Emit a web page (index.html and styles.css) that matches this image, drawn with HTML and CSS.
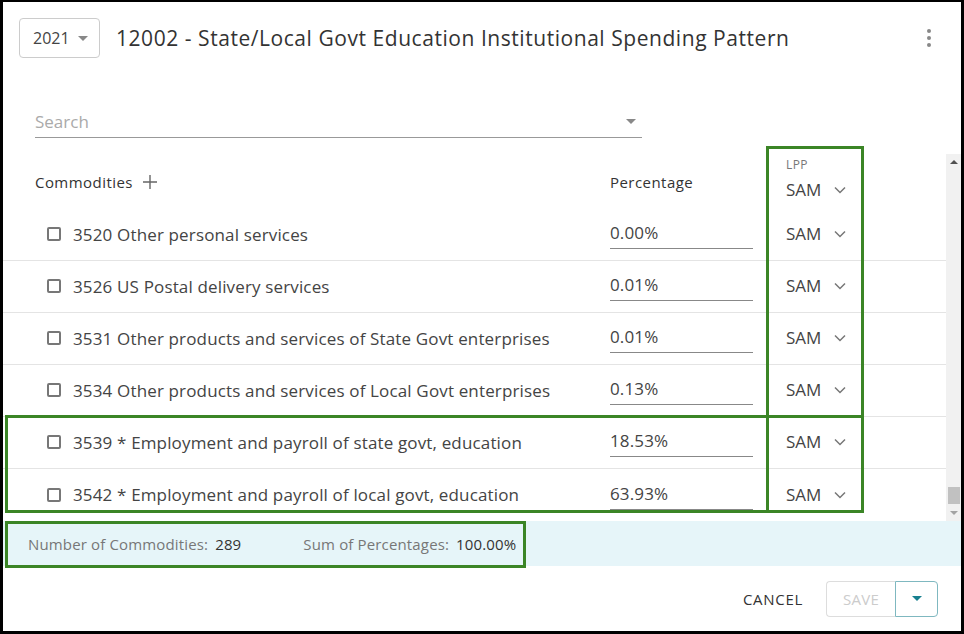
FILE: index.html
```html
<!DOCTYPE html>
<html lang="en">
<head>
    <meta charset="UTF-8">
    <meta name="viewport" content="width=device-width, initial-scale=1.0">
    <title>Spending Pattern</title>
    <link rel="stylesheet" href="styles.css">
</head>
<body>
    <div class="dialog">
        <div class="dlg-head">
            <div class="year-select">
                <span>2021</span>
                <span class="caret"></span>
            </div>
            <h1 class="title">12002 - State/Local Govt Education Institutional Spending Pattern</h1>
            <div class="kebab"><i></i><i></i><i></i></div>
        </div>

        <div class="search-row">
            <div class="search">
                <span>Search</span>
                <span class="caret"></span>
            </div>
        </div>

        <div class="table-wrap">
            <div class="table">
                <div class="row head">
                    <div class="cell name">Commodities
                        <svg class="plus" width="16" height="16" viewBox="0 0 16 16"><path d="M8 1v14M1 8h14" stroke="#666" stroke-width="1.4" fill="none"/></svg>
                    </div>
                    <div class="cell">Percentage</div>
                    <div class="cell lpp">
                        <span class="lpp-label">LPP</span>
                        <div class="sam">SAM <svg width="12" height="8" viewBox="0 0 12 8"><path d="M1 1.5l5 5 5-5" stroke="#777" stroke-width="1.5" fill="none"/></svg></div>
                    </div>
                </div>
                <div class="row">
                    <div class="cell name"><span class="check"></span>3520 Other personal services</div>
                    <div class="cell"><div class="pct">0.00%</div></div>
                    <div class="cell"><div class="sam">SAM <svg width="12" height="8" viewBox="0 0 12 8"><path d="M1 1.5l5 5 5-5" stroke="#777" stroke-width="1.5" fill="none"/></svg></div></div>
                </div>
                <div class="row">
                    <div class="cell name"><span class="check"></span>3526 US Postal delivery services</div>
                    <div class="cell"><div class="pct">0.01%</div></div>
                    <div class="cell"><div class="sam">SAM <svg width="12" height="8" viewBox="0 0 12 8"><path d="M1 1.5l5 5 5-5" stroke="#777" stroke-width="1.5" fill="none"/></svg></div></div>
                </div>
                <div class="row">
                    <div class="cell name"><span class="check"></span>3531 Other products and services of State Govt enterprises</div>
                    <div class="cell"><div class="pct">0.01%</div></div>
                    <div class="cell"><div class="sam">SAM <svg width="12" height="8" viewBox="0 0 12 8"><path d="M1 1.5l5 5 5-5" stroke="#777" stroke-width="1.5" fill="none"/></svg></div></div>
                </div>
                <div class="row">
                    <div class="cell name"><span class="check"></span>3534 Other products and services of Local Govt enterprises</div>
                    <div class="cell"><div class="pct">0.13%</div></div>
                    <div class="cell"><div class="sam">SAM <svg width="12" height="8" viewBox="0 0 12 8"><path d="M1 1.5l5 5 5-5" stroke="#777" stroke-width="1.5" fill="none"/></svg></div></div>
                </div>
                <div class="row">
                    <div class="cell name"><span class="check"></span>3539 * Employment and payroll of state govt, education</div>
                    <div class="cell"><div class="pct">18.53%</div></div>
                    <div class="cell"><div class="sam">SAM <svg width="12" height="8" viewBox="0 0 12 8"><path d="M1 1.5l5 5 5-5" stroke="#777" stroke-width="1.5" fill="none"/></svg></div></div>
                </div>
                <div class="row last">
                    <div class="cell name"><span class="check"></span>3542 * Employment and payroll of local govt, education</div>
                    <div class="cell"><div class="pct">63.93%</div></div>
                    <div class="cell"><div class="sam">SAM <svg width="12" height="8" viewBox="0 0 12 8"><path d="M1 1.5l5 5 5-5" stroke="#777" stroke-width="1.5" fill="none"/></svg></div></div>
                </div>
            </div>
            <div class="scrollbar">
                <span class="arrow up"></span>
                <span class="track"><span class="thumb"></span></span>
                <span class="arrow down"></span>
            </div>
        </div>

        <div class="summary">
            <span class="label">Number of Commodities:</span><span class="value">289</span>
            <span class="label second">Sum of Percentages:</span><span class="value">100.00%</span>
        </div>

        <div class="actions">
            <button class="btn-text">CANCEL</button>
            <div class="split">
                <button class="save" disabled>SAVE</button>
                <button class="more"><span class="caret teal"></span></button>
            </div>
        </div>

        <!-- highlight boxes -->
        <div class="mark mark-lpp"></div>
        <div class="mark mark-rows"></div>
        <div class="mark mark-sum"></div>
    </div>
</body>
</html>
```

FILE: styles.css
```css
html, body {
    margin: 0;
    padding: 0;
}
body {
    font-family: "Open Sans", Arial, sans-serif;
    color: #333;
    background: #000;
}
.dialog {
    position: relative;
    width: 964px;
    height: 634px;
    box-sizing: border-box;
    border: 3px solid #000;
    border-top-width: 2px;
    background: #fff;
    display: flex;
    flex-direction: column;
}
.dlg-head {
    display: flex;
    align-items: center;
    height: 40px;
    padding: 16px 0 0 16px;
}
.year-select {
    display: flex;
    align-items: center;
    box-sizing: border-box;
    width: 81px;
    height: 40px;
    border: 1px solid #ccc;
    border-radius: 4px;
    padding-left: 13px;
    font-size: 16px;
    color: #444;
}
.year-select .caret {
    margin-left: 8px;
}
.caret {
    display: inline-block;
    width: 0;
    height: 0;
    border-left: 5px solid transparent;
    border-right: 5px solid transparent;
    border-top: 5px solid #888;
}
.caret.teal {
    border-top-color: #17808f;
}
.title {
    margin: 0 0 0 16px;
    font-size: 21px;
    font-weight: 500;
    color: #333;
    letter-spacing: 0.55px;
    flex: 1;
}
.kebab {
    display: flex;
    flex-direction: column;
    gap: 3px;
    margin-right: 30px;
}
.kebab i {
    display: block;
    width: 4px;
    height: 4px;
    border-radius: 50%;
    background: #888;
}
.search-row {
    padding: 47px 0 0 32px;
    height: 49px;
}
.search {
    display: flex;
    align-items: center;
    justify-content: space-between;
    box-sizing: border-box;
    width: 607px;
    height: 33px;
    border-bottom: 1px solid #999;
    padding-right: 6px;
    font-size: 17px;
    color: #aaa;
}
.table-wrap {
    display: flex;
    height: 367px;
}
.table {
    flex: 1;
}
.row {
    display: grid;
    grid-template-columns: 563px 176px 160px;
    align-items: center;
    height: 52px;
    padding-left: 44px;
    padding-bottom: 1px;
    border-bottom: 1px solid #e4e4e4;
    box-sizing: border-box;
    font-size: 17px;
    letter-spacing: 0.15px;
    color: #444;
}
.row.last {
    border-bottom: 0;
}
.row.head {
    height: 55px;
    border-bottom: 0;
    padding-left: 32px;
    padding-bottom: 0;
    grid-template-columns: 575px 176px 160px;
    font-size: 15px;
    letter-spacing: 0.45px;
    color: #333;
}
.cell.name {
    display: flex;
    align-items: center;
}
.plus {
    margin-left: 9px;
}
.check {
    display: inline-block;
    box-sizing: border-box;
    width: 14px;
    height: 14px;
    border: 2px solid #777;
    border-radius: 2px;
    margin-right: 12px;
}
.pct {
    box-sizing: border-box;
    width: 143px;
    height: 30px;
    padding-top: 2px;
    border-bottom: 1px solid #888;
}
.sam {
    display: flex;
    align-items: center;
    gap: 13px;
    font-size: 17px;
    line-height: 22px;
    letter-spacing: 0;
    color: #444;
}
.lpp {
    align-self: start;
    display: flex;
    flex-direction: column;
    padding-top: 4px;
}
.lpp-label {
    font-size: 12px;
    line-height: 14px;
    letter-spacing: 0.4px;
    color: #777;
    margin-bottom: 7px;
}
.scrollbar {
    width: 15px;
    display: flex;
    flex-direction: column;
    align-items: center;
    background: #f1f1f1;
}
.arrow {
    width: 0;
    height: 0;
    border-left: 4px solid transparent;
    border-right: 4px solid transparent;
    margin: 6px 0;
}
.arrow.up {
    border-bottom: 4px solid #505050;
}
.arrow.down {
    border-top: 4px solid #a3a3a3;
}
.track {
    flex: 1;
    width: 100%;
    display: flex;
    flex-direction: column;
    justify-content: flex-end;
    align-items: center;
}
.thumb {
    width: 12px;
    height: 17px;
    background: #c1c1c1;
    margin-bottom: 1px;
}
.summary {
    display: flex;
    align-items: center;
    height: 45px;
    padding-left: 25px;
    background: #e6f5f9;
    font-size: 15px;
    letter-spacing: 0.15px;
}
.summary .label {
    color: #777;
}
.summary .value {
    color: #333;
    margin-left: 7px;
}
.summary .second {
    margin-left: 62px;
}
.actions {
    flex: 1;
    display: flex;
    align-items: center;
    justify-content: flex-end;
    padding-right: 23px;
}
.btn-text {
    border: 0;
    background: none;
    font-family: inherit;
    font-size: 15px;
    color: #333;
    letter-spacing: 0.7px;
    margin-right: 23px;
    padding: 0;
}
.split {
    display: flex;
    height: 36px;
}
.split button {
    font-family: inherit;
    background: #fff;
    margin: 0;
}
.save {
    width: 69px;
    border: 1px solid #ddd;
    border-right: 0;
    border-radius: 4px 0 0 4px;
    color: #ccc;
    font-size: 15px;
    letter-spacing: 0.3px;
}
.more {
    width: 43px;
    border: 1px solid #7fb8c0;
    border-radius: 0 4px 4px 0;
    display: flex;
    align-items: center;
    justify-content: center;
}
.mark {
    position: absolute;
    border: 3px solid #3b8526;
    box-sizing: border-box;
}
.mark-lpp {
    left: 763px;
    top: 144px;
    width: 98px;
    height: 367px;
}
.mark-rows {
    left: 2px;
    top: 413px;
    width: 859px;
    height: 98px;
}
.mark-sum {
    left: 2px;
    top: 519px;
    width: 521px;
    height: 47px;
}
```
